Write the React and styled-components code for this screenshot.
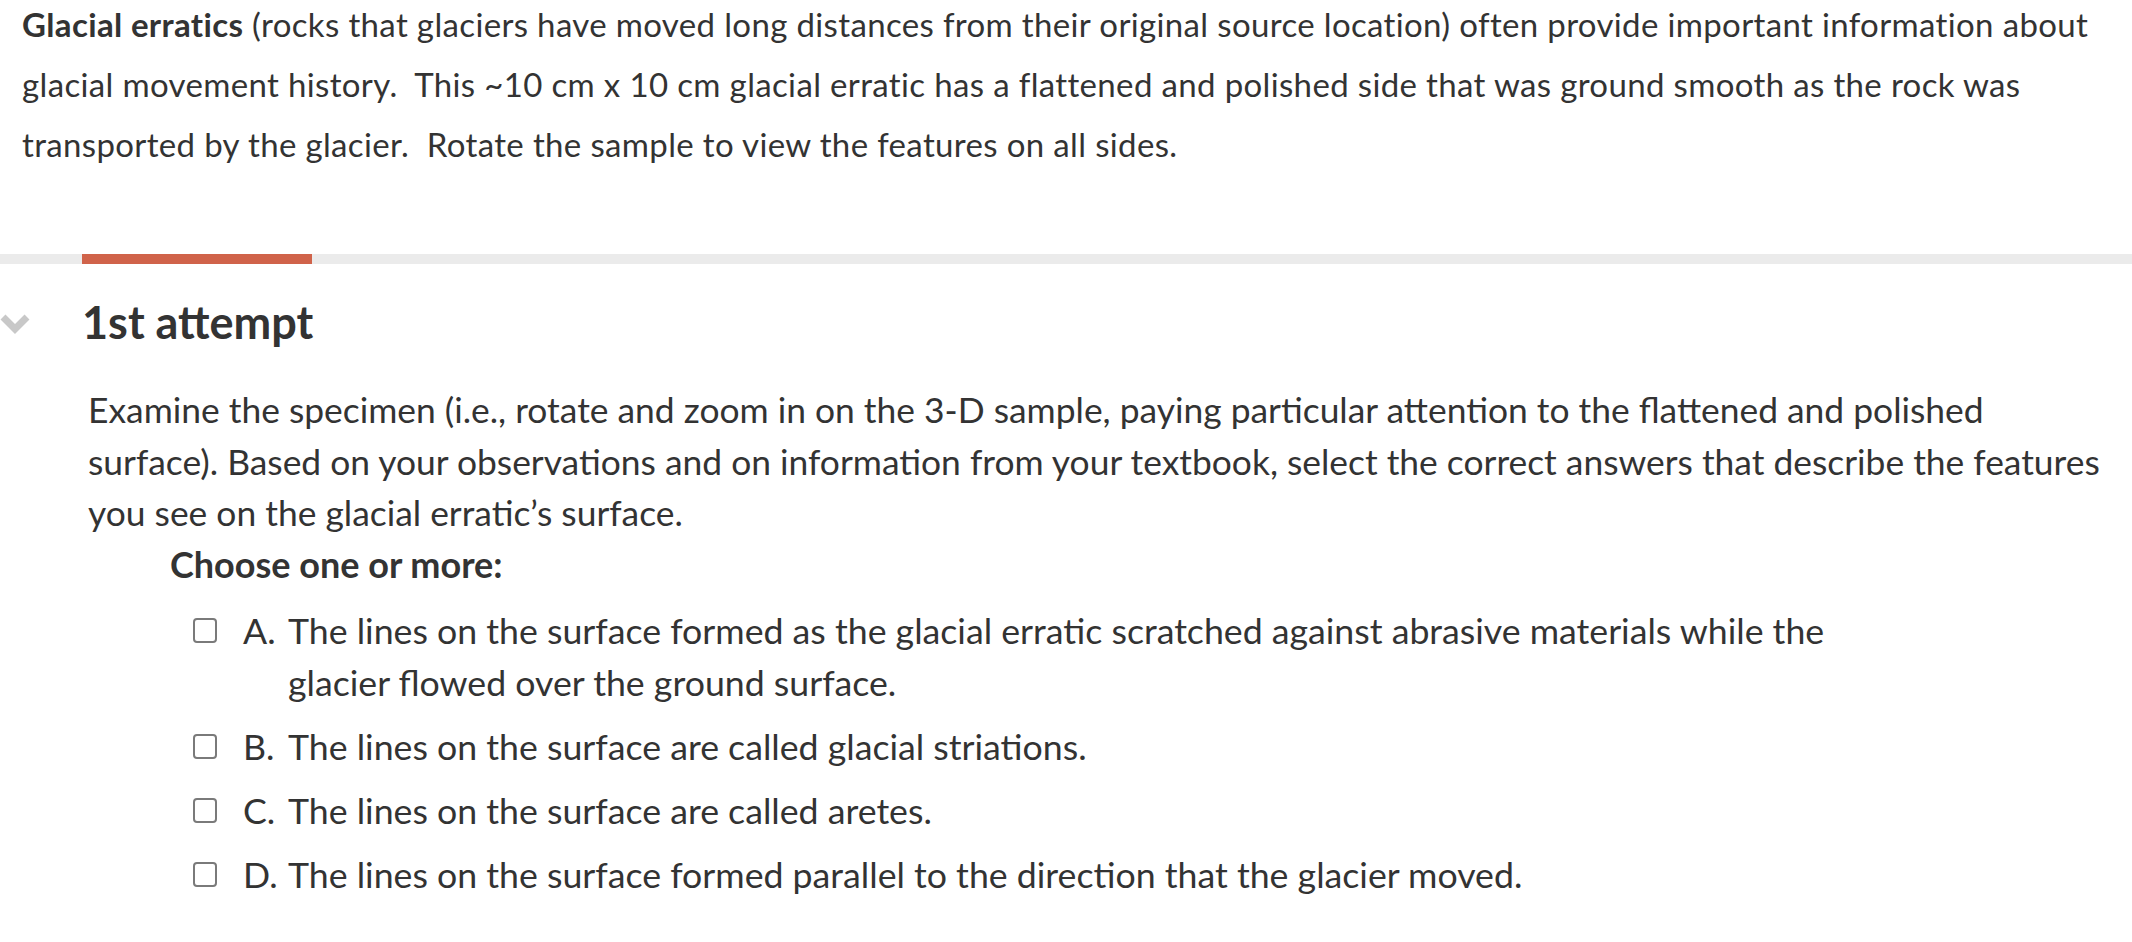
import React from "react";
import styled, { createGlobalStyle } from "styled-components";

const GlobalStyle = createGlobalStyle`
  html, body {
    margin: 0;
    padding: 0;
    background: #ffffff;
  }
  body {
    font-family: Lato, "Open Sans", sans-serif;
    color: #333333;
    overflow: hidden;
  }
`;

const Page = styled.div`
  width: 2132px;
`;

const Intro = styled.p`
  margin: -6px 0 0 0;
  padding: 0 30px 0 22px;
  font-size: 33px;
  letter-spacing: 0.35px;
  line-height: 60px;
`;

const Divider = styled.div`
  margin-top: 80px;
  height: 10px;
  background: #ebebeb;
  display: flex;
`;

const DividerActive = styled.div`
  margin-left: 82px;
  width: 230px;
  background: #d0634a;
`;

const AttemptHeader = styled.div`
  display: flex;
  align-items: center;
  margin-top: 32px;
  height: 52px;
`;

const Chevron = styled.span`
  width: 82px;
  display: flex;
  align-items: center;
  padding-top: 4px;
`;

const AttemptTitle = styled.h2`
  margin: 0;
  font-size: 45px;
  font-weight: 700;
  line-height: 52px;
  color: #333333;
`;

const Question = styled.div`
  padding-left: 88px;
  padding-right: 8px;
  margin-top: 36px;
`;

const Prompt = styled.p`
  margin: 0;
  font-size: 35.4px;
  line-height: 51.5px;
`;

const ChooseLabel = styled.div`
  margin-left: 82px;
  font-size: 36px;
  font-weight: 700;
  line-height: 50px;
`;

const Options = styled.ul`
  list-style: none;
  margin: 16px 0 0 105px;
  padding: 0;
  display: flex;
  flex-direction: column;
  gap: 12px;
`;

const Option = styled.li`
  display: flex;
  align-items: flex-start;
  font-size: 35.7px;
  line-height: 52px;
`;

const Box = styled.span`
  box-sizing: border-box;
  flex: none;
  width: 24px;
  height: 25px;
  margin-top: 13px;
  border: 2px solid #7a7a7a;
  border-radius: 4px;
  background: #ffffff;
`;

const Letter = styled.span`
  flex: none;
  width: 45px;
  margin-left: 26px;
`;

const OptionText = styled.span`
  max-width: 1580px;
`;

const options = [
  {
    letter: "A.",
    text: "The lines on the surface formed as the glacial erratic scratched against abrasive materials while the glacier flowed over the ground surface.",
  },
  { letter: "B.", text: "The lines on the surface are called glacial striations." },
  { letter: "C.", text: "The lines on the surface are called aretes." },
  {
    letter: "D.",
    text: "The lines on the surface formed parallel to the direction that the glacier moved.",
  },
];

export default function App() {
  return (
    <Page>
      <GlobalStyle />
      <Intro>
        <b>Glacial erratics</b> (rocks that glaciers have moved long distances from their
        original source location) often provide important information about glacial movement
        history.&nbsp; This ~10 cm x 10 cm glacial erratic has a flattened and polished side
        that was ground smooth as the rock was transported by the glacier.&nbsp; Rotate the
        sample to view the features on all sides.
      </Intro>

      <Divider>
        <DividerActive />
      </Divider>

      <AttemptHeader>
        <Chevron>
          <svg width="30" height="22" viewBox="0 0 30 22">
            <polyline
              points="3,4 15,16 27,4"
              fill="none"
              stroke="#c8c8c8"
              strokeWidth="7"
            />
          </svg>
        </Chevron>
        <AttemptTitle>1st attempt</AttemptTitle>
      </AttemptHeader>

      <Question>
        <Prompt>
          Examine the specimen (i.e., rotate and zoom in on the 3-D sample, paying particular
          attention to the flattened and polished
          <br />
          surface). Based on your observations and on information from your textbook, select
          the correct answers that describe the features you see on the glacial erratic’s
          surface.
        </Prompt>
        <ChooseLabel>Choose one or more:</ChooseLabel>
        <Options>
          {options.map((o) => (
            <Option key={o.letter}>
              <Box />
              <Letter>{o.letter}</Letter>
              <OptionText>{o.text}</OptionText>
            </Option>
          ))}
        </Options>
      </Question>
    </Page>
  );
}
